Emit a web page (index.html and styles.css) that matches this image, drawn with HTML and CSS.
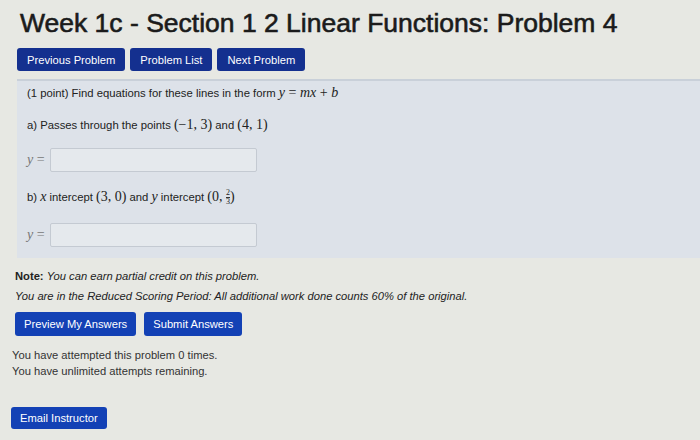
FILE: index.html
```html
<!DOCTYPE html>
<html>
<head>
<meta charset="utf-8">
<link rel="stylesheet" href="styles.css">
</head>
<body>
<div class="page">
  <h1 class="title">Week 1c - Section 1 2 Linear Functions: Problem 4</h1>
  <div class="nav">
    <span class="btn dark">Previous Problem</span>
    <span class="btn dark">Problem List</span>
    <span class="btn dark">Next Problem</span>
  </div>
  <div class="problem">
    <p class="line">(1 point) Find equations for these lines in the form <span class="math"><i>y</i> = <i>mx</i> + <i>b</i></span></p>
    <p class="line part">a) Passes through the points <span class="math">(&minus;1, 3)</span> and <span class="math">(4, 1)</span></p>
    <div class="answer"><span class="math lbl"><i>y</i> =</span><span class="input"></span></div>
    <p class="line part">b) <span class="math"><i>x</i></span> intercept <span class="math">(3, 0)</span> and <span class="math"><i>y</i></span> intercept <span class="math">(0, <span class="frac"><span>2</span><span>3</span></span>)</span></p>
    <div class="answer second"><span class="math lbl"><i>y</i> =</span><span class="input"></span></div>
  </div>
  <div class="note">
    <p><b>Note:</b> <i>You can earn partial credit on this problem.</i></p>
    <p><i>You are in the Reduced Scoring Period: All additional work done counts 60% of the original.</i></p>
  </div>
  <div class="actions">
    <span class="btn bright">Preview My Answers</span>
    <span class="btn bright">Submit Answers</span>
  </div>
  <div class="attempts">
    <p>You have attempted this problem 0 times.</p>
    <p>You have unlimited attempts remaining.</p>
  </div>
  <div class="email">
    <span class="btn bright">Email Instructor</span>
  </div>
</div>
</body>
</html>
```

FILE: styles.css
```css
html, body {
  margin: 0;
  padding: 0;
  background: #e7e8e3;
}
body {
  width: 700px;
  height: 440px;
  overflow: hidden;
  font-family: "Liberation Sans", Arial, sans-serif;
  color: #222;
}
.page {
  padding: 6px 0 0 0;
}
.title {
  margin: 0 0 0 20px;
  font-size: 26.5px;
  font-weight: normal;
  -webkit-text-stroke: 0.6px #1b1b1b;
  color: #1b1b1b;
  line-height: 34px;
}
.nav {
  display: flex;
  gap: 5px;
  margin: 8px 0 0 17px;
}
.btn {
  display: inline-flex;
  align-items: center;
  justify-content: center;
  height: 23px;
  padding: 0 10px;
  border-radius: 3px;
  color: #fff;
  font-size: 11.2px;
  white-space: nowrap;
}
.dark {
  background: #14308f;
}
.bright {
  background: #1341b5;
}
.problem {
  margin: 8px 0 0 17px;
  background: #dde2e9;
  border-top: 2px solid #c9d0d9;
  padding: 3px 10px 0 10px;
  height: 179px;
  box-sizing: border-box;
}
.line {
  margin: 0;
  font-size: 11.3px;
  line-height: 18px;
  white-space: nowrap;
}
.part {
  margin-top: 14px;
}
.math {
  font-family: "Liberation Serif", "Times New Roman", serif;
  font-size: 14px;
  white-space: nowrap;
}
.math i {
  font-style: italic;
}
.answer {
  display: flex;
  align-items: center;
  gap: 4px;
  margin-top: 14px;
  margin-bottom: 16px;
}
.answer.second {
  margin-top: 17px;
}
.lbl {
  color: #777;
  white-space: nowrap;
  min-width: 19px;
}
.input {
  display: block;
  width: 207px;
  height: 24px;
  box-sizing: border-box;
  border: 1px solid #c4cad2;
  border-radius: 2px;
  background: #e5e9ed;
}
.frac {
  display: inline-flex;
  flex-direction: column;
  font-size: 8px;
  line-height: 8px;
  vertical-align: middle;
  text-align: center;
}
.frac span:first-child {
  border-bottom: 1px solid #333;
}
.note {
  margin: 8px 0 0 15px;
  font-size: 11.2px;
  line-height: 20px;
  color: #222;
  white-space: nowrap;
}
.note p, .attempts p {
  margin: 0;
}
.actions {
  display: flex;
  gap: 8px;
  margin: 6px 0 0 15px;
}
.actions .btn {
  height: 24px;
  padding: 0 9px;
}
.attempts {
  margin: 11px 0 0 12px;
  font-size: 11.2px;
  line-height: 16px;
  color: #333;
}
.email {
  margin: 28px 0 0 11px;
}
.email .btn {
  height: 22px;
  padding: 0 9px;
}
```
